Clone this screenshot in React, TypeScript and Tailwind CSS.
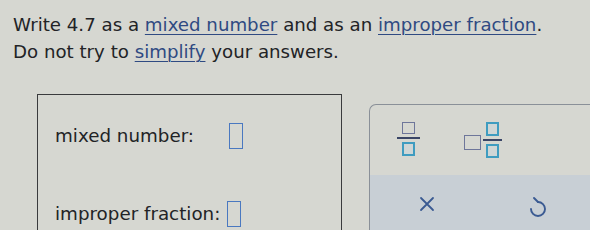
import React from "react";

function Box({ teal = false }: { teal?: boolean }) {
  return (
    <div
      className={
        teal
          ? "w-[13px] h-[14px] border-2 border-[#3f9cc0] bg-[#cfd6d6]"
          : "w-[13px] h-[12px] border-[1.5px] border-[#6e769a]"
      }
    />
  );
}

export default function App() {
  return (
    <div
      className="w-[590px] h-[230px] overflow-hidden bg-[#d6d7d1] text-[#222326]"
      style={{ fontFamily: '"DejaVu Sans", Verdana, sans-serif' }}
    >
      <div className="pl-[13px] pt-[11px] text-[18.2px] leading-[27px] whitespace-nowrap">
        <div>
          Write 4.7 as a{" "}
          <span className="text-[#2f4a82] underline underline-offset-[3px] decoration-[1px]">mixed number</span> and as an{" "}
          <span className="text-[#2f4a82] underline underline-offset-[3px] decoration-[1px]">improper fraction</span>.
        </div>
        <div>
          Do not try to{" "}
          <span className="text-[#2f4a82] underline underline-offset-[3px] decoration-[1px]">simplify</span> your answers.
        </div>
      </div>
      <div className="flex mt-[29px]">
        <div className="ml-[37px] w-[305px] h-[200px] border-[1.5px] border-[#3a3b3d] pl-[17px] pt-[27px] text-[18.3px] whitespace-nowrap">
          <div className="flex items-center h-[28px]">
            <span className="w-[174px]">mixed number:</span>
            <div className="w-[14px] h-[26px] border-[1.5px] border-[#4a78c0]" />
          </div>
          <div className="flex items-center h-[28px] mt-[50px]">
            <span className="w-[172px]">improper fraction:</span>
            <div className="w-[14px] h-[26px] border-[1.5px] border-[#4a78c0]" />
          </div>
        </div>
        <div className="ml-[27px] mt-[10px] flex-1 h-[200px] border-[1.5px] border-r-0 border-[#8a9098] rounded-tl-[7px] flex flex-col">
          <div className="h-[70px] flex items-start pt-[17px]">
            <div className="ml-[27px] flex flex-col items-center">
              <Box />
              <div className="w-[23px] h-[2px] bg-[#3a4566] my-[3px]" />
              <Box teal />
            </div>
            <div className="ml-[44px] flex items-center">
              <div className="w-[17px] h-[15px] border-[1.5px] border-[#6e769a] mt-[4px]" />
              <div className="ml-[2px] flex flex-col items-center">
                <Box teal />
                <div className="w-[19px] h-[2px] bg-[#3a4566] my-[3px]" />
                <Box teal />
              </div>
            </div>
          </div>
          <div className="flex-1 bg-[#c8cfd5] relative">
            <svg className="absolute left-[49px] top-[21px]" width="16" height="16" viewBox="0 0 16 16">
              <path d="M2 2 L14 14 M14 2 L2 14" stroke="#3a5a92" strokeWidth="1.8" strokeLinecap="round" />
            </svg>
            <svg className="absolute left-[158px] top-[20px]" width="20" height="26" viewBox="0 0 20 26">
              <path d="M10 7 A7 7 0 1 1 3 14" fill="none" stroke="#3a5a92" strokeWidth="1.9" strokeLinecap="round" />
              <path d="M10 7 L6 3" fill="none" stroke="#3a5a92" strokeWidth="1.9" strokeLinecap="round" />
            </svg>
          </div>
        </div>
      </div>
    </div>
  );
}
